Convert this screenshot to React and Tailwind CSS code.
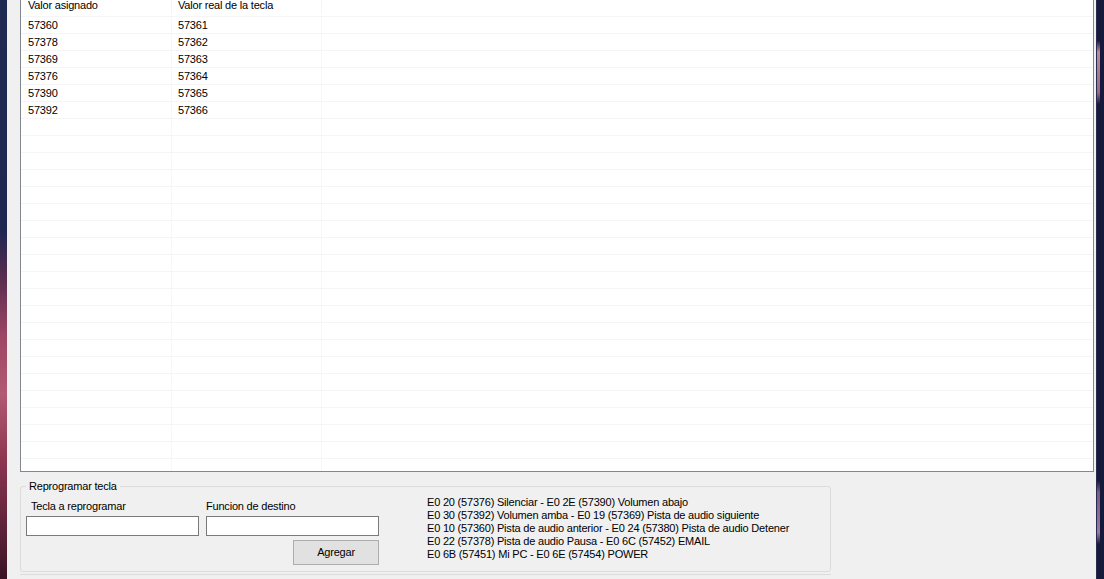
import React from "react";

const rows = [
  ["57360", "57361"],
  ["57378", "57362"],
  ["57369", "57363"],
  ["57376", "57364"],
  ["57390", "57365"],
  ["57392", "57366"],
];

const info = [
  "E0 20 (57376) Silenciar - E0 2E (57390) Volumen abajo",
  "E0 30 (57392) Volumen amba - E0 19 (57369) Pista de audio siguiente",
  "E0 10 (57360) Pista de audio anterior - E0 24 (57380) Pista de audio Detener",
  "E0 22 (57378) Pista de audio Pausa - E0 6C (57452) EMAIL",
  "E0 6B (57451) Mi PC - E0 6E (57454) POWER",
];

export default function App() {
  const allRows = [...rows, ...Array.from({ length: 22 }, () => ["", ""])];
  return (
    <div
      className="flex w-[1104px] h-[579px] overflow-hidden text-[11px] text-black tracking-[-0.2px]"
      style={{ fontFamily: '"Liberation Sans", Arial, sans-serif' }}
    >
      <div className="w-[7px] h-full bg-[linear-gradient(180deg,#1d2a52_0%,#1f2750_40%,#5a2c50_48%,#9c4664_58%,#b25a74_68%,#8a3450_80%,#3a1424_100%)]" />
      <div className="flex-1 h-full bg-[#f0f0f0] flex flex-col pl-[13px] pr-[2px]">
        <div className="h-[472px] bg-white border-x border-b border-[#828790] overflow-hidden flex flex-col">
          <div className="flex h-[21px] -mt-[4px] pb-[2px] shrink-0 border-b border-[#f5f5f5]">
            <div className="w-[151px] pl-[7px] flex items-center border-r border-[#f5f5f5]">Valor asignado</div>
            <div className="w-[150px] pl-[6px] flex items-center border-r border-[#f5f5f5]">Valor real de la tecla</div>
          </div>
          {allRows.map((r, i) => (
            <div key={i} className="flex h-[17px] shrink-0 border-b border-[#f5f5f5]">
              <div className="w-[151px] pl-[7px] pt-[1px] flex items-center border-r border-[#f7f7f7]">{r[0]}</div>
              <div className="w-[150px] pl-[6px] pt-[1px] flex items-center border-r border-[#f7f7f7]">{r[1]}</div>
            </div>
          ))}
        </div>
        <div className="relative mt-[14px] w-[811px] h-[86px] border border-[#dcdcdc] rounded-[3px] flex">
          <span className="absolute -top-[8px] left-[5px] px-[3px] bg-[#f0f0f0] leading-[14px]">Reprogramar tecla</span>
          <div className="flex flex-col pt-[13px] pl-[5px] w-[358px]">
            <div className="flex leading-[13px]">
              <div className="w-[180px] pl-[5px]">Tecla a reprogramar</div>
              <div>Funcion de destino</div>
            </div>
            <div className="flex gap-[7px] mt-[3px]">
              <div className="w-[173px] h-[20px] bg-white border border-[#7a7a7a]" />
              <div className="w-[173px] h-[20px] bg-white border border-[#7a7a7a]" />
            </div>
            <div className="mt-[4px] ml-[267px] w-[86px] h-[25px] bg-[#e1e1e1] border border-[#adadad] flex items-center justify-center">
              Agregar
            </div>
          </div>
          <div className="pt-[9px] ml-[48px] leading-[13px] whitespace-nowrap">
            {info.map((l, i) => (
              <div key={i}>{l}</div>
            ))}
          </div>
        </div>
        <div className="mt-[2px] w-[811px] border-t border-[#dcdcdc]" />
      </div>
      <div className="w-[8px] h-full flex bg-[#151a3a]">
        <div className="w-[1px] h-full bg-[#2a2a50]" />
        <div className="w-[3px] h-full bg-[linear-gradient(180deg,#151a3a_0%,#151a3a_7%,#c08a9a_9%,#9a6a86_16%,#151a3a_18%,#151a3a_83%,#7a5a86_85%,#9a7aa0_92%,#151a3a_94%,#151a3a_100%)]" />
      </div>
    </div>
  );
}
